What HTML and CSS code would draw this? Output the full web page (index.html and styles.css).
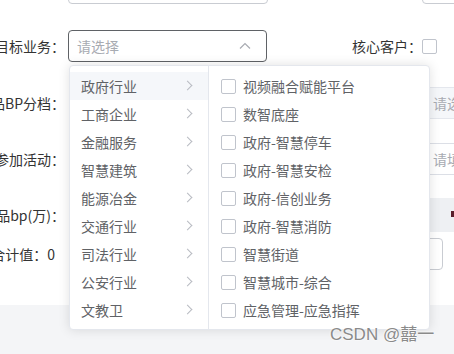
FILE: index.html
```html
<!DOCTYPE html>
<html lang="zh">
<head>
<meta charset="utf-8">
<link rel="stylesheet" href="styles.css">
</head>
<body>
<div class="page">
  <div class="form">
    <div class="row row0">
      <div class="label"></div>
      <div class="field"><div class="input stub"></div></div>
      <div class="rlabel"></div>
      <div class="rfield"><div class="input stub"></div></div>
    </div>
    <div class="row row1">
      <div class="label">目标业务：</div>
      <div class="field">
        <div class="select focus">
          <span class="ph">请选择</span>
          <svg class="caret" width="12" height="8" viewBox="0 0 12 8"><path d="M1 6.5 L6 1.5 L11 6.5" fill="none" stroke="#a8abb2" stroke-width="1.2"/></svg>
        </div>
      </div>
      <div class="rlabel">核心客户：</div>
      <div class="rfield"><span class="cb"></span></div>
    </div>
    <div class="row row2">
      <div class="label">产品BP分档：</div>
      <div class="field"></div>
      <div class="rlabel"></div>
      <div class="rfield"><div class="input disabled"><span class="ph">请选择</span></div></div>
    </div>
    <div class="row row3">
      <div class="label">是否参加活动：</div>
      <div class="field"></div>
      <div class="rlabel"></div>
      <div class="rfield"><div class="input"><span class="ph">请填写</span></div></div>
    </div>
    <div class="row row4">
      <div class="label">产品bp(万)：</div>
      <div class="field"></div>
      <div class="rlabel"></div>
      <div class="rfield"><div class="thead"><span class="mark"></span></div></div>
    </div>
    <div class="row row5">
      <div class="label total">合计值：0</div>
      <div class="field"></div>
      <div class="rlabel"></div>
      <div class="rfield"><div class="cell"></div></div>
    </div>
  </div>
  <div class="band"></div>

  <div class="dropdown">
    <ul class="menu">
      <li class="node active"><span>政府行业</span><i class="arrow"></i></li>
      <li class="node"><span>工商企业</span><i class="arrow"></i></li>
      <li class="node"><span>金融服务</span><i class="arrow"></i></li>
      <li class="node"><span>智慧建筑</span><i class="arrow"></i></li>
      <li class="node"><span>能源冶金</span><i class="arrow"></i></li>
      <li class="node"><span>交通行业</span><i class="arrow"></i></li>
      <li class="node"><span>司法行业</span><i class="arrow"></i></li>
      <li class="node"><span>公安行业</span><i class="arrow"></i></li>
      <li class="node"><span>文教卫</span><i class="arrow"></i></li>
    </ul>
    <ul class="menu sub">
      <li class="node"><span class="cb"></span><span>视频融合赋能平台</span></li>
      <li class="node"><span class="cb"></span><span>数智底座</span></li>
      <li class="node"><span class="cb"></span><span>政府-智慧停车</span></li>
      <li class="node"><span class="cb"></span><span>政府-智慧安检</span></li>
      <li class="node"><span class="cb"></span><span>政府-信创业务</span></li>
      <li class="node"><span class="cb"></span><span>政府-智慧消防</span></li>
      <li class="node"><span class="cb"></span><span>智慧街道</span></li>
      <li class="node"><span class="cb"></span><span>智慧城市-综合</span></li>
      <li class="node"><span class="cb"></span><span>应急管理-应急指挥</span></li>
    </ul>
  </div>

  <div class="watermark">CSDN @囍一</div>
</div>
</body>
</html>
```
FILE: styles.css
```css
* { box-sizing: border-box; }
html, body { margin: 0; padding: 0; }
body {
  width: 454px;
  height: 354px;
  overflow: hidden;
  background: #fff;
  font-family: "Noto Sans CJK SC", "Microsoft YaHei", sans-serif;
  font-size: 14px;
  color: #333;
}
.page { position: relative; width: 454px; height: 354px; overflow: hidden; }
.form { margin-left: -62px; margin-top: -28px; width: 600px; }
.row { display: flex; align-items: center; height: 32px; }
.row > * { flex: none; }
.row1 { margin-top: 26px; }
.row2 { margin-top: 25px; }
.row3 { margin-top: 24px; }
.row4 { margin-top: 23px; height: 34px; }
.row5 { margin-top: 6px; }
.label {
  width: 130px;
  padding-right: 3px;
  text-align: right;
  white-space: nowrap;
  color: #333;
  line-height: 32px;
}
.label.total { padding-right: 13px; }
.field { width: 199px; height: 32px; }
.rlabel {
  width: 155px;
  text-align: right;
  white-space: nowrap;
  color: #333;
}
.rfield { width: 80px; height: 100%; display: flex; align-items: center; }
.input {
  width: 200px;
  height: 32px;
  flex: none;
  border: 1px solid #dcdfe6;
  border-radius: 4px;
  background: #fff;
  display: flex;
  align-items: center;
  padding-left: 10px;
}
.input.stub { border-color: #c9ccd2; }
.input.disabled { background: #f5f7fa; border-color: #e4e7ed; }
.ph { color: #a8abb2; white-space: nowrap; }
.select {
  width: 199px;
  height: 32px;
  border: 1px solid #5f6266;
  border-radius: 4px;
  display: flex;
  align-items: center;
  justify-content: space-between;
  padding: 0 15px 0 8px;
}
.caret { display: block; }
.cb {
  display: inline-block;
  width: 15px;
  height: 15px;
  border: 1px solid #c0c4cc;
  border-radius: 2px;
  background: #fff;
  flex: none;
}
.thead {
  width: 100px;
  height: 34px;
  margin-left: 8px;
  flex: none;
  background: #eef0f3;
  position: relative;
}
.mark {
  position: absolute;
  left: 21px;
  top: 13px;
  width: 4px;
  height: 6px;
  background: #5a1e2a;
}
.cell {
  width: 23px;
  height: 32px;
  margin-left: -2px;
  flex: none;
  border: 1px solid #c9ccd2;
  border-radius: 4px;
}
.band {
  margin-top: 35px;
  height: 60px;
  background: #f4f5f7;
}
.dropdown {
  position: absolute;
  left: 69px;
  top: 65px;
  width: 361px;
  height: 265px;
  background: #fff;
  border: 1px solid #e4e7ed;
  border-radius: 4px;
  box-shadow: 0 0 12px rgba(0, 0, 0, 0.12);
  display: flex;
}
.menu {
  list-style: none;
  margin: 0;
  padding: 6px 0;
  width: 139px;
  border-right: 1px solid #e4e7ed;
}
.menu.sub { border-right: none; flex: 1; }
.node {
  height: 28px;
  display: flex;
  align-items: center;
  padding-left: 11px;
  color: #606266;
  position: relative;
}
.node.active { background: #f5f7fa; }
.sub .node { padding-left: 12px; gap: 7px; }
.arrow {
  position: absolute;
  right: 17px;
  top: 10px;
  width: 7px;
  height: 7px;
  border-top: 1px solid #b8bbc2;
  border-right: 1px solid #b8bbc2;
  transform: rotate(45deg);
}
.watermark {
  position: absolute;
  left: 330px;
  top: 320px;
  font-family: "Liberation Sans", "Noto Sans CJK SC", sans-serif;
  font-size: 17px;
  color: #8a8a8a;
  text-shadow: 0 0 2px #fff, 0 0 2px #fff;
  white-space: nowrap;
}
```
